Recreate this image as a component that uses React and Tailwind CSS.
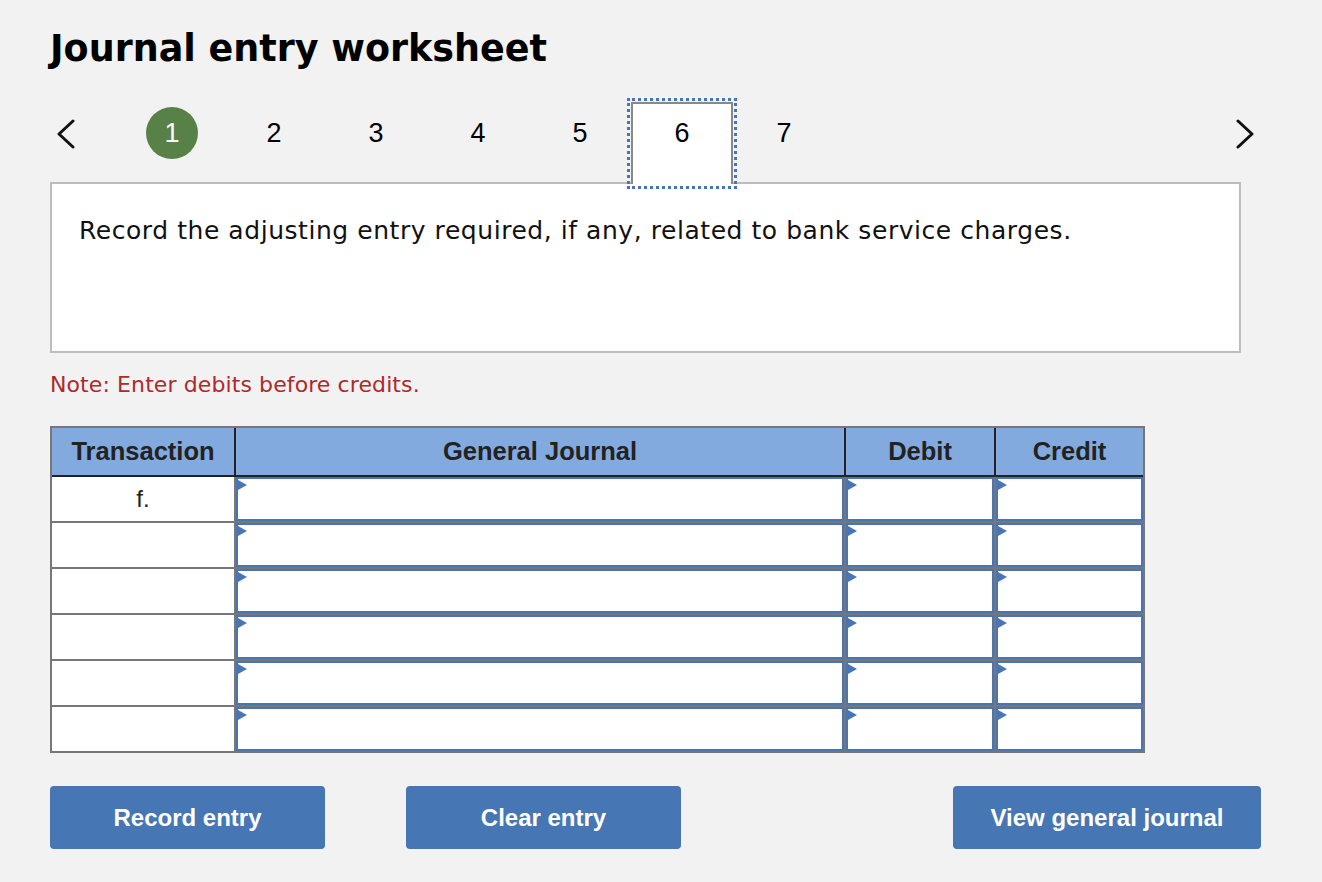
import React from "react";

const verdana = { fontFamily: '"DejaVu Sans", Verdana, sans-serif' };
const arial = { fontFamily: '"Liberation Sans", Arial, sans-serif' };

function Chevron({ dir }) {
  return (
    <svg width="20" height="30" viewBox="0 0 20 30" fill="none">
      {dir === "left" ? (
        <polyline points="17,2 3,15 17,28" stroke="#111" strokeWidth="3" strokeLinecap="round" strokeLinejoin="round" />
      ) : (
        <polyline points="3,2 17,15 3,28" stroke="#111" strokeWidth="3" strokeLinecap="round" strokeLinejoin="round" />
      )}
    </svg>
  );
}

function InputCell() {
  return (
    <div className="bg-[#777]">
      <div className="relative h-[44px] border-2 border-[#4a75b5] bg-white">
        <span className="absolute left-0 top-[1px] h-0 w-0 border-y-[5px] border-l-[9px] border-y-transparent border-l-[#4a75b5]" />
      </div>
    </div>
  );
}

export default function App() {
  const steps = [1, 2, 3, 4, 5, 6, 7];
  const rows = ["f.", "", "", "", "", ""];

  return (
    <div className="min-h-[882px] w-full bg-[#f2f2f2] pl-[50px] pt-[31px]">
      <h1 className="h-[36px] text-[36.5px] font-bold leading-none text-black" style={verdana}>
        Journal entry worksheet
      </h1>

      {/* step tabs */}
      <div className="mt-[35px] flex h-[80px] w-[1211px]">
        <div className="flex w-[71px] items-start pl-[6px]">
          <div className="mt-[17px]">
            <Chevron dir="left" />
          </div>
        </div>
        {steps.map((n) => {
          if (n === 1) {
            return (
              <div key={n} className="flex w-[102px] justify-center pt-[5px]">
                <div className="flex h-[52px] w-[52px] items-center justify-center rounded-full bg-[#588148] text-[27px] text-white" style={arial}>
                  1
                </div>
              </div>
            );
          }
          if (n === 6) {
            return (
              <div key={n} className="relative z-10 h-[82px] w-[102px] border-2 border-b-0 border-[#888] bg-white pt-[3px]">
                <span className="absolute -inset-x-[6px] -bottom-[5px] -top-[6px] border-[3px] border-dotted border-[#4a75b5]" />
                <div className="flex h-[52px] items-center justify-center text-[27px] text-black" style={arial}>
                  6
                </div>
              </div>
            );
          }
          return (
            <div key={n} className="flex w-[102px] justify-center pt-[5px]">
              <div className="flex h-[52px] items-center justify-center text-[27px] text-black" style={arial}>
                {n}
              </div>
            </div>
          );
        })}
        <div className="ml-auto mr-[6px] mt-[17px]">
          <Chevron dir="right" />
        </div>
      </div>

      {/* question */}
      <div className="h-[171px] w-[1191px] border-2 border-[#bdbdbd] bg-white px-[27px] pt-[28px]">
        <p className="text-[25px] tracking-[0.55px] text-[#111]" style={verdana}>
          Record the adjusting entry required, if any, related to bank service charges.
        </p>
      </div>

      <p className="mt-[15px] text-[22px] tracking-[0.1px] text-[#b0282a]" style={verdana}>
        Note: Enter debits before credits.
      </p>

      {/* journal table */}
      <div className="mt-[25px] w-[1095px] border-2 border-[#777]">
        <div className="grid grid-cols-[182px_608px_148px_147px] gap-x-[2px] border-b-2 border-[#222] bg-[#222] text-[25.5px] font-bold text-[#222]" style={arial}>
          <div className="flex h-[47px] items-center justify-center bg-[#83aadf]">Transaction</div>
          <div className="flex h-[47px] items-center justify-center bg-[#83aadf]">General Journal</div>
          <div className="flex h-[47px] items-center justify-center bg-[#83aadf]">Debit</div>
          <div className="flex h-[47px] items-center justify-center bg-[#83aadf]">Credit</div>
        </div>
        <div className="grid grid-cols-[182px_608px_148px_147px] gap-[2px] bg-[#777]">
          {rows.map((t, i) => (
            <React.Fragment key={i}>
              <div className="flex h-[44px] items-center justify-center bg-white text-[24px] text-[#222]" style={arial}>
                {t}
              </div>
              <InputCell />
              <InputCell />
              <InputCell />
            </React.Fragment>
          ))}
        </div>
      </div>

      {/* actions */}
      <div className="mt-[33px] flex w-[1211px] text-[24px] font-bold text-white" style={arial}>
        <button className="h-[63px] w-[275px] rounded-[4px] bg-[#4676b3]">Record entry</button>
        <button className="ml-[81px] h-[63px] w-[275px] rounded-[4px] bg-[#4676b3]">Clear entry</button>
        <button className="ml-auto h-[63px] w-[308px] rounded-[4px] bg-[#4676b3]">View general journal</button>
      </div>
    </div>
  );
}
